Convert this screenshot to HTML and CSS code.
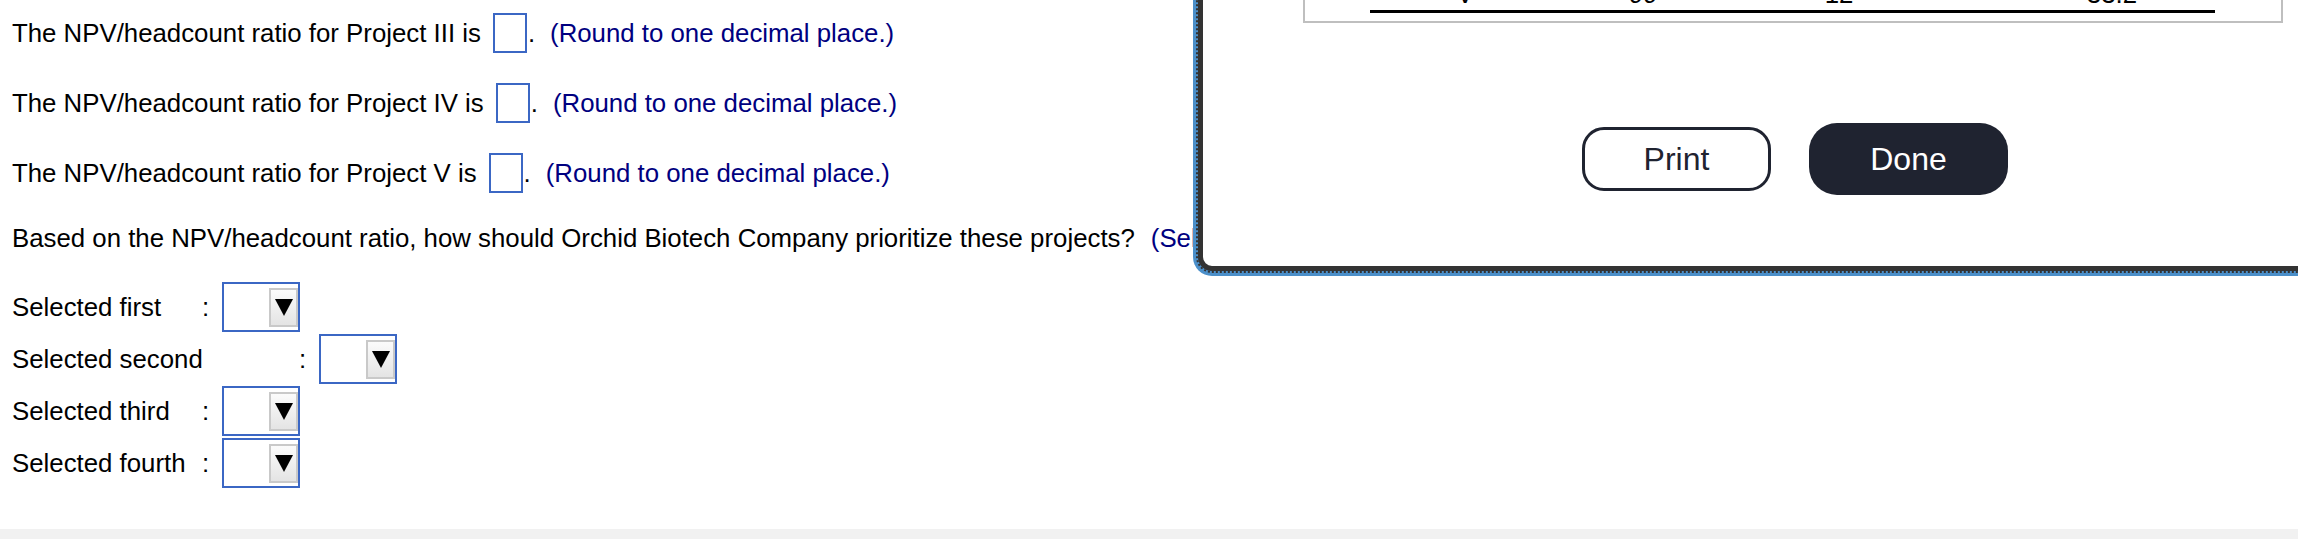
FILE: index.html
```html
<!DOCTYPE html>
<html lang="en">
<head>
<meta charset="utf-8">
<title>NPV/headcount ratio</title>
<link rel="stylesheet" href="styles.css">
</head>
<body>
<main class="question">
  <div class="answers">
    <p class="q-line">
      <span class="stem">The NPV/headcount ratio for Project III is</span>
      <span class="answer-box"></span>
      <span class="stop">.</span>
      <span class="hint">(Round to one decimal place.)</span>
    </p>
    <p class="q-line">
      <span class="stem">The NPV/headcount ratio for Project IV is</span>
      <span class="answer-box"></span>
      <span class="stop">.</span>
      <span class="hint">(Round to one decimal place.)</span>
    </p>
    <p class="q-line">
      <span class="stem">The NPV/headcount ratio for Project V is</span>
      <span class="answer-box"></span>
      <span class="stop">.</span>
      <span class="hint">(Round to one decimal place.)</span>
    </p>
  </div>

  <p class="q-line q-prompt">
    <span class="stem">Based on the NPV/headcount ratio, how should Orchid Biotech Company prioritize these projects?</span>
    <span class="hint hint-wide">(Select from the drop-down menus.)</span>
  </p>

  <div class="rank-list">
    <div class="rank-row">
      <span class="rank-label">Selected first</span>
      <span class="rank-colon">:</span>
      <span class="dropdown"><span class="dropdown-btn"><span class="caret"></span></span></span>
    </div>
    <div class="rank-row">
      <span class="rank-label rank-label-long">Selected second</span>
      <span class="rank-colon">:</span>
      <span class="dropdown"><span class="dropdown-btn"><span class="caret"></span></span></span>
    </div>
    <div class="rank-row">
      <span class="rank-label">Selected third</span>
      <span class="rank-colon">:</span>
      <span class="dropdown"><span class="dropdown-btn"><span class="caret"></span></span></span>
    </div>
    <div class="rank-row">
      <span class="rank-label">Selected fourth</span>
      <span class="rank-colon">:</span>
      <span class="dropdown"><span class="dropdown-btn"><span class="caret"></span></span></span>
    </div>
  </div>
</main>
<div class="footer-bar"></div>

<div class="dialog">
  <div class="dialog-panel">
    <table class="data-table">
      <tr>
        <td class="col-a">V</td>
        <td class="col-b">99</td>
        <td class="col-c">12</td>
        <td class="col-d">33.2</td>
      </tr>
    </table>
  </div>
  <div class="dialog-actions">
    <button class="btn btn-outline" type="button">Print</button>
    <button class="btn btn-solid" type="button">Done</button>
  </div>
</div>
</body>
</html>
```

FILE: styles.css
```css
html, body {
  margin: 0;
  padding: 0;
  background: #ffffff;
}

body {
  font-family: "Liberation Sans", Arial, sans-serif;
  font-size: 25.8px;
  color: #000000;
  overflow: hidden;
}

.question {
  height: 529px;
  box-sizing: border-box;
  padding: 13px 0 0 12px;
  display: flex;
  flex-direction: column;
}

.answers {
  display: flex;
  flex-direction: column;
  gap: 30px;
}

.q-line {
  display: flex;
  align-items: center;
  height: 40px;
  margin: 0;
  white-space: nowrap;
}

.q-prompt {
  margin-top: 25px;
}

.answer-box {
  display: block;
  width: 34px;
  height: 40px;
  box-sizing: border-box;
  border: 2px solid #3b67c4;
  margin-left: 12px;
  margin-right: 1px;
  background: #ffffff;
}

.hint {
  color: #000080;
  margin-left: 15px;
}

.hint-wide {
  margin-left: 16px;
}

.rank-list {
  margin-top: 24px;
  display: flex;
  flex-direction: column;
  gap: 2px;
}

.rank-row {
  display: flex;
  align-items: center;
  height: 50px;
  white-space: nowrap;
}

.rank-label {
  width: 190px;
}

.rank-label-long {
  width: 287px;
}

.dropdown {
  display: flex;
  align-items: center;
  justify-content: flex-end;
  width: 78px;
  height: 50px;
  box-sizing: border-box;
  border: 2px solid #3b67c4;
  margin-left: 13px;
  background: #ffffff;
}

.dropdown-btn {
  display: flex;
  align-items: center;
  justify-content: center;
  width: 29px;
  height: 39px;
  box-sizing: border-box;
  border: 2px solid #c9c9c9;
  background: linear-gradient(#fbfbfb, #e4e4e4);
}

.caret {
  width: 0;
  height: 0;
  border-left: 9.5px solid transparent;
  border-right: 9.5px solid transparent;
  border-top: 17px solid #000000;
}

.footer-bar {
  height: 10px;
  background: #f1f1f1;
}

/* modal window laid over the question */
.dialog {
  position: absolute;
  left: 1198px;
  bottom: 268px;
  width: 1190px;
  box-sizing: border-box;
  padding: 40px 100px 71px;
  background: #ffffff;
  border: 5px solid #333333;
  border-radius: 14px;
  outline: 2px dotted #333333;
  outline-offset: 0;
  box-shadow: 0 0 0 5px #4b8fc9;
  display: flex;
  flex-direction: column;
}

.dialog-panel {
  width: 980px;
  box-sizing: border-box;
  border: 2px solid #bfbfbf;
  padding: 60px 0 8px;
}

.data-table {
  border-collapse: collapse;
  width: 845px;
  margin: 0 65px;
  border-bottom: 3px solid #000000;
}

.data-table td {
  padding: 0 0 1.5px;
  line-height: 30px;
  text-align: center;
}

.col-a { width: 190px; }
.col-b { width: 166px; }
.col-c { width: 226px; }
.col-d {
  width: 263px;
  text-align: right !important;
  padding-right: 78px !important;
  box-sizing: border-box;
}

.dialog-actions {
  display: flex;
  justify-content: center;
  align-items: center;
  gap: 38px;
  margin-top: 100px;
  padding-left: 4px;
}

.btn {
  font-family: "Liberation Sans", Arial, sans-serif;
  font-size: 32px;
  box-sizing: border-box;
  display: flex;
  align-items: center;
  justify-content: center;
  padding: 0;
  cursor: pointer;
}

.btn-outline {
  width: 189px;
  height: 64px;
  border: 3.5px solid #1f2330;
  border-radius: 22px;
  background: #ffffff;
  color: #1f2330;
}

.btn-solid {
  width: 199px;
  height: 72px;
  border: none;
  border-radius: 28px;
  background: #1f2330;
  color: #ffffff;
}
```
